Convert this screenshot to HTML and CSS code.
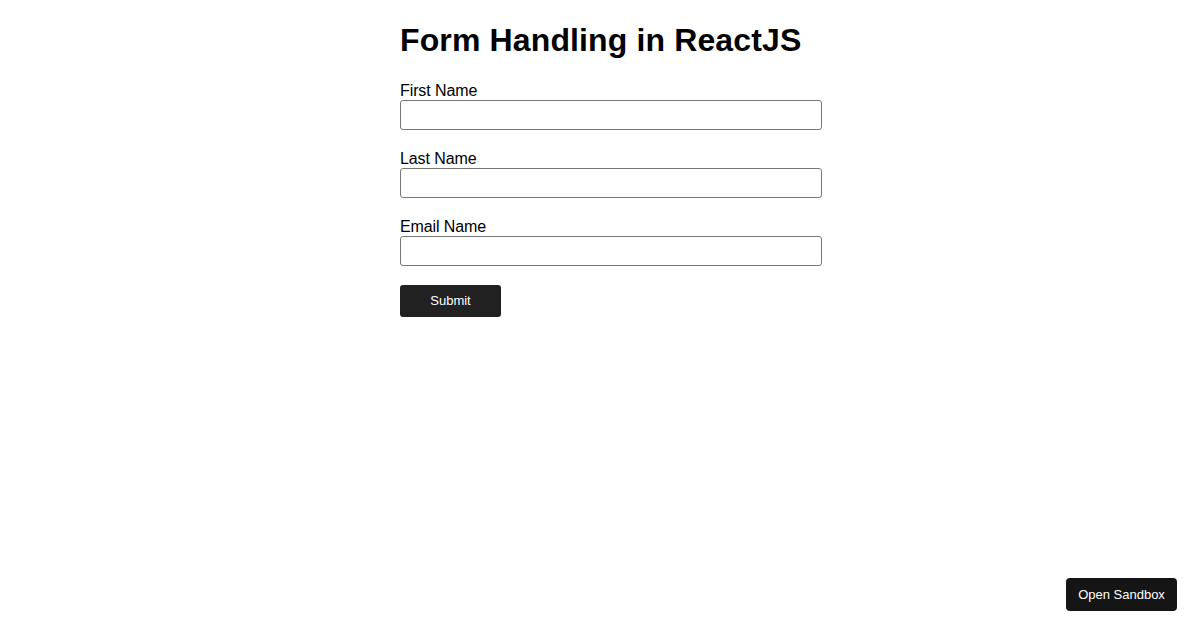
FILE: index.html
```html
<!DOCTYPE html>
<html>
<head>
<meta charset="utf-8">
<link rel="stylesheet" href="styles.css">
</head>
<body>
<div class="container">
  <h1 class="title">Form Handling in ReactJS</h1>
  <form class="form">
    <div class="field">
      <label class="label">First Name</label>
      <input class="input" type="text">
    </div>
    <div class="field">
      <label class="label">Last Name</label>
      <input class="input" type="text">
    </div>
    <div class="field">
      <label class="label">Email Name</label>
      <input class="input" type="text">
    </div>
    <button class="submit" type="button">Submit</button>
  </form>
</div>
<a class="sandbox-btn">Open Sandbox</a>
</body>
</html>
```

FILE: styles.css
```css
html, body {
  margin: 0;
  padding: 0;
  background: #fff;
  font-family: "Liberation Sans", Arial, sans-serif;
  color: #000;
}
.container {
  width: 400px;
  margin: 0 auto;
  padding-top: 22px;
}
.title {
  font-size: 32px;
  font-weight: bold;
  letter-spacing: 0.13px;
  white-space: nowrap;
  margin: 0 0 23px;
  line-height: 36.8px;
}
.form {
  display: flex;
  flex-direction: column;
  align-items: flex-start;
}
.field {
  width: 100%;
  margin-bottom: 20px;
}
.label {
  display: block;
  font-size: 16px;
  line-height: 18px;
  letter-spacing: -0.1px;
}
.input {
  display: block;
  width: 100%;
  height: 18px;
  padding: 5px 10px;
  border: 1px solid #767676;
  border-radius: 3px;
  font-family: "Liberation Sans", Arial, sans-serif;
  font-size: 13px;
  margin: 0;
  box-sizing: content-box;
}
.submit {
  width: 101px;
  height: 32px;
  margin-top: -1px;
  background: #212121;
  color: #fff;
  border: none;
  border-radius: 3px;
  font-family: "Liberation Sans", Arial, sans-serif;
  font-size: 13px;
  padding: 0;
}
.sandbox-btn {
  position: fixed;
  right: 23px;
  bottom: 19px;
  width: 111px;
  height: 33px;
  display: flex;
  align-items: center;
  justify-content: center;
  background: #151515;
  color: #fff;
  border-radius: 4px;
  font-family: "Liberation Sans", Arial, sans-serif;
  font-size: 13px;
}
```
